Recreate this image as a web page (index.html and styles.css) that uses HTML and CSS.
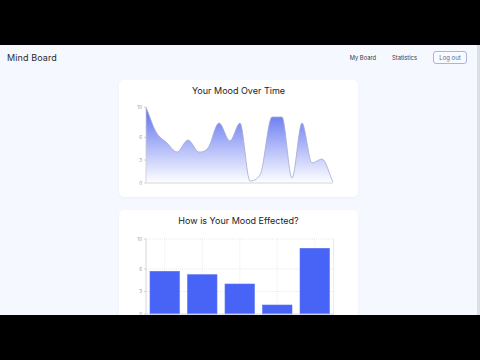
FILE: index.html
```html
<!DOCTYPE html>
<html>
<head>
  <title>Mind Board</title>
  <link rel="stylesheet" href="styles.css">
</head>
<body>

<div class="screen">
  <div class="page">

    <!-- top bar -->
    <div class="topbar">
      <div class="brand">Mind Board</div>
      <div class="nav">
        <a class="nav-link">My Board</a>
        <a class="nav-link">Statistics</a>
        <button type="button" class="logout">Log out</button>
      </div>
    </div>

    <!-- mood line chart -->
    <div class="card">
      <h2 class="card-title">Your Mood Over Time</h2>
      <svg class="chart" width="239" height="95" viewBox="0 0 239 95">
        <defs>
          <linearGradient id="moodFill" gradientUnits="userSpaceOnUse" x1="0" y1="5" x2="0" y2="81">
            <stop offset="0" stop-color="#5a6ef0"/>
            <stop offset="1" stop-color="#ffffff"/>
          </linearGradient>
        </defs>
        <g class="axis-labels">
          <text x="23" y="6.5">10</text>
          <text x="23" y="36.9">6</text>
          <text x="23" y="59.5">3</text>
          <text x="23" y="82.5">0</text>
        </g>
        <path class="area" d="M27,5 C31,15 35,28.2 39,33 C42,36.6 45,38.3 48,41 C51.3,44 54.7,50 58,50 C61.7,50 65.3,38 69,38 C72.7,38 76.3,50 80,50 C83,50 86,49.6 89,46 C92.7,41.6 96.3,21 100,21 C103.7,21 107.3,39 111,39 C114.3,39 117.7,21 121,21 C124.3,21 127.7,79 131,79 C134.3,79 137.7,78 141,73 C145,67 149,15 153,15 L163,15 C166.3,15 169.7,76 173,76 C176.3,76 179.7,21 183,21 C186.3,21 189.7,61 193,61 C196.3,61 199.7,57 203,57 C206.7,57 210.3,72.7 214,80 L214,81 L27,81 Z"/>
        <path class="line" d="M27,5 C31,15 35,28.2 39,33 C42,36.6 45,38.3 48,41 C51.3,44 54.7,50 58,50 C61.7,50 65.3,38 69,38 C72.7,38 76.3,50 80,50 C83,50 86,49.6 89,46 C92.7,41.6 96.3,21 100,21 C103.7,21 107.3,39 111,39 C114.3,39 117.7,21 121,21 C124.3,21 127.7,79 131,79 C134.3,79 137.7,78 141,73 C145,67 149,15 153,15 L163,15 C166.3,15 169.7,76 173,76 C176.3,76 179.7,21 183,21 C186.3,21 189.7,61 193,61 C196.3,61 199.7,57 203,57 C206.7,57 210.3,72.7 214,80"/>
        <path class="axis" d="M27,5 V81 H214 M25,5 H27 M25,35.4 H27 M25,58 H27 M25,81 H27"/>
      </svg>
    </div>

    <!-- mood bar chart -->
    <div class="card">
      <h2 class="card-title">How is Your Mood Effected?</h2>
      <svg class="chart" width="239" height="95" viewBox="0 0 239 95">
        <path class="grid" d="M27,7 H214.5 M27,37 H214.5 M27,59.5 H214.5 M45.75,7 V82 M83.25,7 V82 M120.75,7 V82 M158.25,7 V82 M195.75,7 V82"/>
        <path class="grid-edge" d="M214.5,7 V82"/>
        <g class="axis-labels">
          <text x="23" y="8.5">10</text>
          <text x="23" y="38.5">6</text>
          <text x="23" y="61">3</text>
          <text x="23" y="83.5">0</text>
        </g>
        <rect class="bar" x="31" y="39.3" width="29.5" height="42.7"/>
        <rect class="bar" x="68.5" y="42.7" width="29.5" height="39.3"/>
        <rect class="bar" x="106" y="52" width="29.5" height="30"/>
        <rect class="bar" x="143.5" y="73" width="29.5" height="9"/>
        <rect class="bar" x="181" y="16.3" width="29.5" height="65.7"/>
        <path class="axis" d="M27,7 V82 H214.5 M25,7 H27 M25,37 H27 M25,59.5 H27 M25,82 H27"/>
      </svg>
    </div>

  </div>
  <div class="scrollbar"></div>
</div>

</body>
</html>
```

FILE: styles.css
```css
body {
  margin: 0;
  padding: 45px 0;
  background-color: #000000;
  font-family: "Inter", "Open Sans", sans-serif;
}

.screen {
  height: 270px;
  display: flex;
  overflow: hidden;
  background-color: #f5f8ff;
}

.page {
  flex: 1;
  display: flex;
  flex-direction: column;
  align-items: center;
}

.scrollbar {
  width: 3px;
  background-color: #dcdee6;
}

.topbar {
  align-self: stretch;
  flex-shrink: 0;
  height: 24px;
  padding: 0 10px 0 7px;
  display: flex;
  align-items: center;
  justify-content: space-between;
}

.brand {
  font-size: 9px;
  color: #2a2a2a;
  letter-spacing: 0.1px;
}

.nav {
  display: flex;
  align-items: center;
  font-size: 5.8px;
  color: #3a3a3a;
}

.nav-link {
  margin-right: 16px;
}

.logout {
  font-family: inherit;
  font-size: 6px;
  color: #5a6790;
  background-color: #f8faff;
  border: 1px solid #aab4dc;
  border-radius: 3px;
  width: 34px;
  height: 13px;
  padding: 0;
}

.card {
  width: 239px;
  height: 117px;
  margin-top: 11px;
  background-color: #ffffff;
  border-radius: 5px;
  box-shadow: 0 1px 3px rgba(60, 70, 120, 0.05);
  display: flex;
  flex-direction: column;
  flex-shrink: 0;
}

.card + .card {
  margin-top: 13px;
}

.card-title {
  height: 22px;
  margin: 0;
  font-size: 9px;
  font-weight: normal;
  line-height: 22px;
  text-align: center;
  color: #222222;
}

.chart {
  display: block;
}

.axis-labels text {
  font-size: 4.5px;
  fill: #999999;
  text-anchor: end;
}

.axis {
  fill: none;
  stroke: #cccccc;
  stroke-width: 0.8;
}

.area {
  fill: url(#moodFill);
}

.line {
  fill: none;
  stroke: #a3a9cc;
  stroke-width: 0.8;
}

.grid {
  fill: none;
  stroke: #e2e2e2;
  stroke-width: 0.7;
  stroke-dasharray: 1 1;
}

.grid-edge {
  stroke: #e6e6e6;
  stroke-width: 0.8;
}

.bar {
  fill: #4864f6;
  stroke: #5a74f2;
  stroke-width: 0.6;
}
```
